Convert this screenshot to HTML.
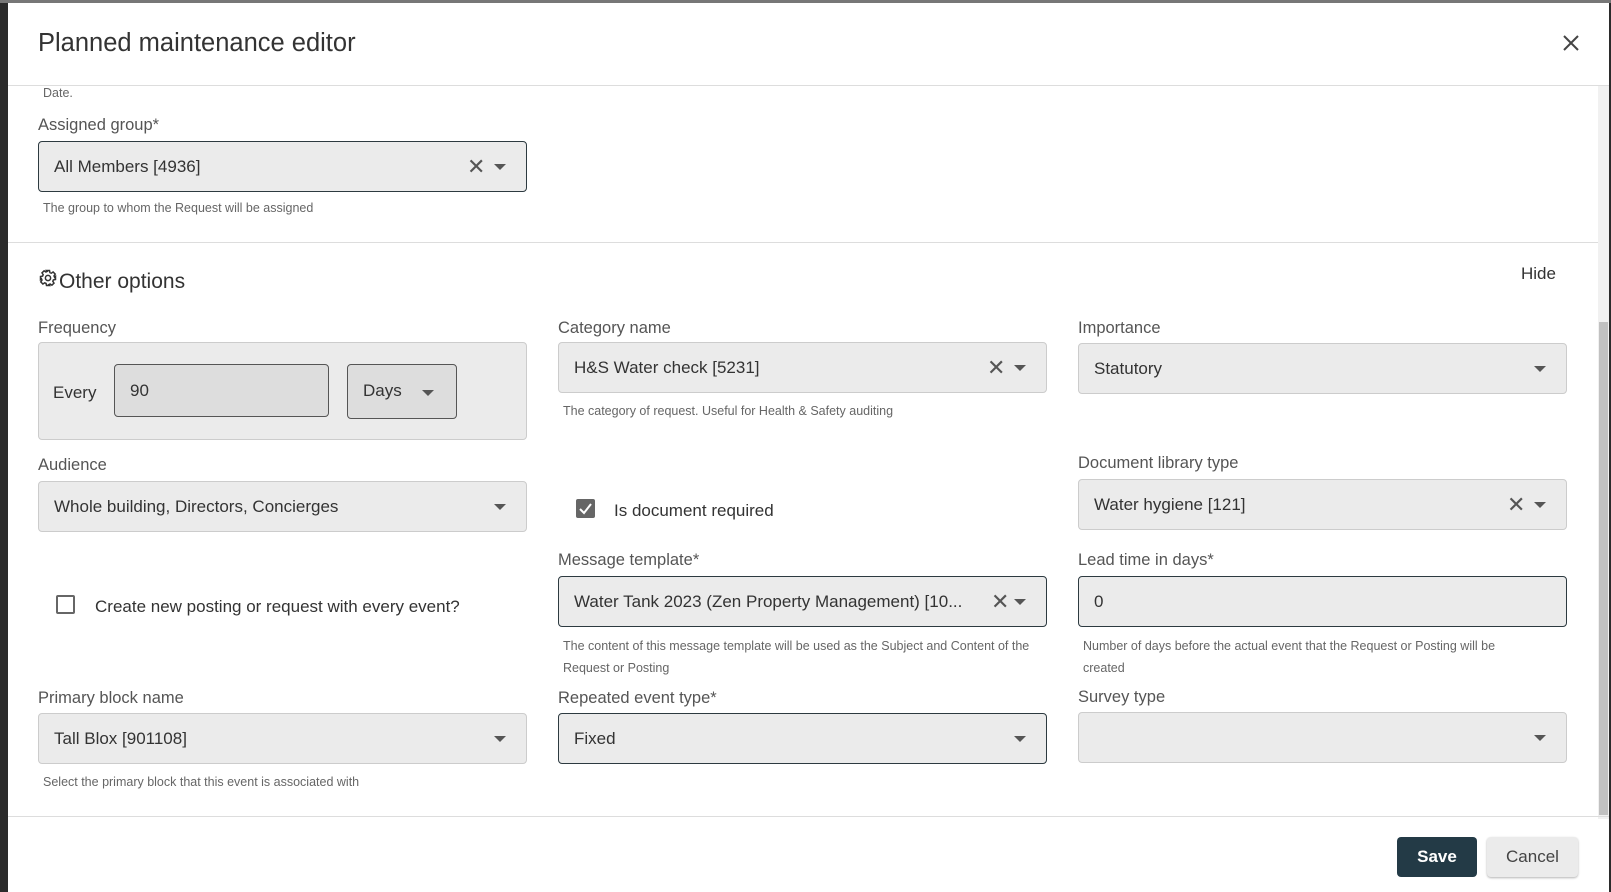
<!DOCTYPE html>
<html><head><meta charset="utf-8"><style>
*{box-sizing:border-box;margin:0;padding:0}
body{width:1611px;height:892px;overflow:hidden;background:#2b2b2b;font-family:"Liberation Sans",sans-serif;color:#333;position:relative}
.top{position:absolute;left:0;top:0;width:1611px;height:3px;background:#777}
.modal{position:absolute;left:8px;top:3px;width:1601px;height:889px;background:#fff}
.a{position:absolute}
.lbl{font-size:16.5px;color:#555}
.help{font-size:12.5px;color:#666}
.sel{position:absolute;height:51px;background:#ebebeb;border:1px solid #ccc;border-radius:4px;font-size:17px;color:#333;padding-left:15px;line-height:49px;white-space:nowrap;overflow:hidden}
.dark{border-color:#2d3a40}
.car{position:absolute;top:22px;width:0;height:0;border-left:6px solid transparent;border-right:6px solid transparent;border-top:6px solid #555}
.x{position:absolute;top:0;font-size:22px;color:#555}
.cb{position:absolute;width:19px;height:19px;border:2px solid #666;border-radius:2px}
</style></head><body>
<div class="top"></div>
<div class="modal">
<div class="a" style="left:30px;top:26px;font-size:25.5px;color:#333">Planned maintenance editor</div>
<svg class="a" style="left:1555px;top:32px" width="16" height="16"><path d="M1 1L15 15M15 1L1 15" stroke="#444" stroke-width="2"/></svg>
<div class="a" style="left:0;top:82px;width:1601px;height:1px;background:#ddd"></div>
<div class="a" style="left:1590px;top:83px;width:11px;height:733px;background:#f1f1f1"></div>
<div class="a" style="left:1591px;top:319px;width:9px;height:493px;background:#c1c1c1"></div>
<div class="a help" style="left:35px;top:83px">Date.</div>
<div class="a lbl" style="left:30px;top:113px">Assigned group*</div>
<div class="sel dark" style="left:30px;top:138px;width:489px">All Members [4936]<span class="x" style="left:428px">✕</span><span class="car" style="left:455px"></span></div>
<div class="a help" style="left:35px;top:198px">The group to whom the Request will be assigned</div>
<div class="a" style="left:0;top:239px;width:1590px;height:1px;background:#ddd"></div>
<svg class="a" style="left:31px;top:266px" width="18" height="18" viewBox="0 0 24 24"><path d="M12 8.5a3.5 3.5 0 1 0 0 7a3.5 3.5 0 1 0 0-7zM10 2h4l.6 2.8 1.8.8 2.4-1.6 2.8 2.8-1.6 2.4.8 1.8L22 10v4l-2.8.6-.8 1.8 1.6 2.4-2.8 2.8-2.4-1.6-1.8.8L14 22h-4l-.6-2.8-1.8-.8-2.4 1.6-2.8-2.8 1.6-2.4-.8-1.8L2 14v-4l2.8-.6.8-1.8L4 5.2 6.8 2.4l2.4 1.6 1.8-.8z" fill="none" stroke="#333" stroke-width="2"/></svg>
<div class="a" style="left:51px;top:267px;font-size:21px;color:#333">Other options</div>
<div class="a" style="left:1513px;top:261px;font-size:17px;color:#333">Hide</div>

<div class="a lbl" style="left:30px;top:316px">Frequency</div>
<div class="a" style="left:30px;top:339px;width:489px;height:98px;background:#ebebeb;border:1px solid #ccc;border-radius:4px"></div>
<div class="a" style="left:45px;top:380px;font-size:17px">Every</div>
<div class="sel" style="left:106px;top:361px;width:215px;height:53px;background:#ddd;border-color:#555;line-height:51px">90</div>
<div class="sel" style="left:339px;top:361px;width:110px;height:55px;background:#ddd;border-color:#555;line-height:51px">Days<span class="car" style="left:74px;top:25px"></span></div>

<div class="a lbl" style="left:550px;top:316px">Category name</div>
<div class="sel" style="left:550px;top:339px;width:489px">H&amp;S Water check [5231]<span class="x" style="left:428px">✕</span><span class="car" style="left:455px"></span></div>
<div class="a help" style="left:555px;top:401px">The category of request. Useful for Health &amp; Safety auditing</div>

<div class="a lbl" style="left:1070px;top:316px">Importance</div>
<div class="sel" style="left:1070px;top:340px;width:489px">Statutory<span class="car" style="left:455px"></span></div>

<div class="a lbl" style="left:30px;top:453px">Audience</div>
<div class="sel" style="left:30px;top:478px;width:489px">Whole building, Directors, Concierges<span class="car" style="left:455px"></span></div>

<div class="a" style="left:568px;top:496px;width:19px;height:19px;background:#666;border-radius:2px"><svg width="19" height="19"><path d="M4 10L8 14L15 5" stroke="#fff" stroke-width="2" fill="none"/></svg></div>
<div class="a" style="left:606px;top:498px;font-size:17px">Is document required</div>

<div class="a lbl" style="left:1070px;top:451px">Document library type</div>
<div class="sel" style="left:1070px;top:476px;width:489px">Water hygiene [121]<span class="x" style="left:428px">✕</span><span class="car" style="left:455px"></span></div>

<div class="cb" style="left:48px;top:592px"></div>
<div class="a" style="left:87px;top:594px;font-size:17px">Create new posting or request with every event?</div>

<div class="a lbl" style="left:550px;top:548px">Message template*</div>
<div class="sel dark" style="left:550px;top:573px;width:489px">Water Tank 2023 (Zen Property Management) [10...<span class="x" style="left:428px;background:#ebebeb;padding:0 4px">✕</span><span class="car" style="left:455px"></span></div>
<div class="a help" style="left:555px;top:632px;line-height:22px;width:470px">The content of this message template will be used as the Subject and Content of the Request or Posting</div>

<div class="a lbl" style="left:1070px;top:548px">Lead time in days*</div>
<div class="sel dark" style="left:1070px;top:573px;width:489px;background:#ebebeb">0</div>
<div class="a help" style="left:1075px;top:632px;line-height:22px;width:445px">Number of days before the actual event that the Request or Posting will be created</div>

<div class="a lbl" style="left:30px;top:686px">Primary block name</div>
<div class="sel" style="left:30px;top:710px;width:489px">Tall Blox [901108]<span class="car" style="left:455px"></span></div>
<div class="a help" style="left:35px;top:772px">Select the primary block that this event is associated with</div>

<div class="a lbl" style="left:550px;top:686px">Repeated event type*</div>
<div class="sel dark" style="left:550px;top:710px;width:489px">Fixed<span class="car" style="left:455px"></span></div>

<div class="a lbl" style="left:1070px;top:685px">Survey type</div>
<div class="sel" style="left:1070px;top:709px;width:489px"><span class="car" style="left:455px"></span></div>

<div class="a" style="left:0;top:813px;width:1601px;height:1px;background:#ddd"></div>
<div class="a" style="left:1389px;top:834px;width:80px;height:40px;background:#233a46;border-radius:4px;color:#fff;font-size:17px;font-weight:bold;text-align:center;line-height:40px">Save</div>
<div class="a" style="left:1479px;top:834px;width:91px;height:40px;background:#ebebeb;border-radius:4px;color:#444;font-size:17px;text-align:center;line-height:40px;box-shadow:0 1px 2px rgba(0,0,0,.3)">Cancel</div>
</div>
</body></html>
